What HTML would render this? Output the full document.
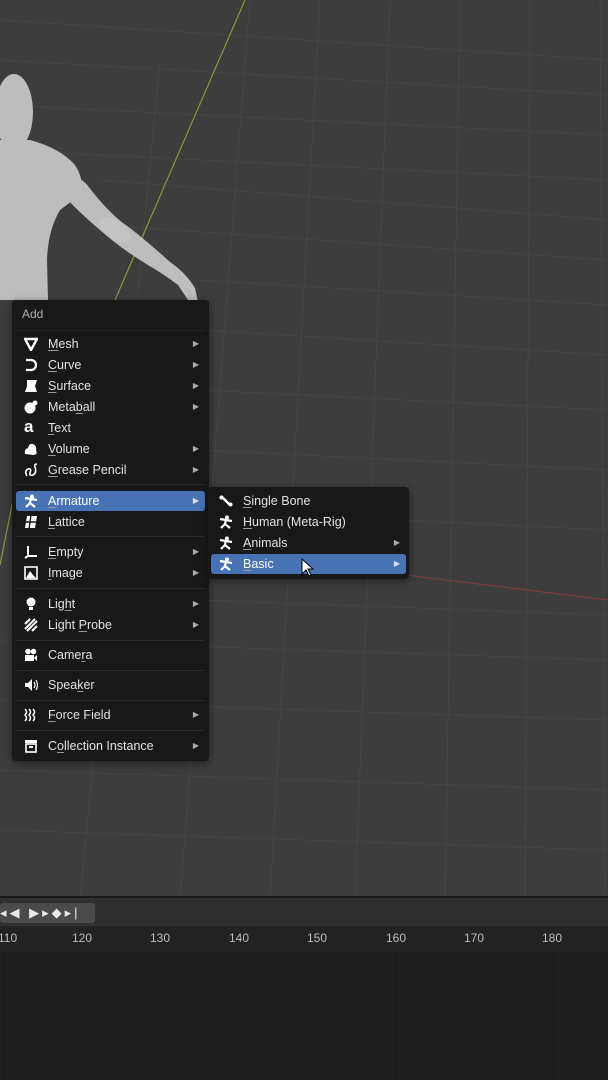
<!DOCTYPE html>
<html><head><meta charset="utf-8"><style>
*{margin:0;padding:0;box-sizing:border-box}
body{width:608px;height:1080px;overflow:hidden;background:#3d3d3d;font-family:"Liberation Sans",sans-serif;position:relative}
.menu{position:absolute;background:#181818;border-radius:4px;box-shadow:0 2px 8px rgba(0,0,0,.5)}
.it{position:absolute;left:4px;right:4px;height:20px;color:#e2e2e2;font-size:12.5px;line-height:20px;padding-left:32px}
.it.hl{background:#4772b3;border-radius:3px;color:#fff}
.it .ic{position:absolute;left:8px;top:3px;width:14px;height:14px}
.it .ar{position:absolute;right:6px;top:0;font-size:8px;color:#aaa}
.it.hl .ar{color:#dde}
.sep{position:absolute;left:4px;right:4px;height:1px;background:#2a2a2a}
.u{text-decoration:underline;text-decoration-color:#999;text-underline-offset:2px}
.num{position:absolute;top:931px;color:#bdbdbd;font-size:12px}
</style></head><body>
<svg width="608" height="900" style="position:absolute;left:0;top:0">
<g stroke="#454545" stroke-width="1" fill="none">
<path d="M0 20 L608 60"/><path d="M0 60 L608 95"/><path d="M0 105 L608 135"/><path d="M0 150 L608 180"/><path d="M100 180 L608 220"/><path d="M100 225 L608 260"/><path d="M200 280 L608 305"/><path d="M200 330 L608 355"/><path d="M200 390 L608 410"/><path d="M200 450 L608 470"/><path d="M400 520 L608 530"/><path d="M200 600 L608 615"/><path d="M0 640 L608 660"/><path d="M0 700 L608 720"/><path d="M0 770 L608 790"/><path d="M0 830 L608 850"/>
<path d="M320 0 L270 900"/><path d="M390 0 L355 900"/><path d="M460 0 L445 900"/><path d="M530 0 L525 900"/><path d="M600 0 L605 900"/><path d="M250 0 L180 900"/><path d="M160 60 L80 900"/>
</g>
<path d="M245 0 L115 300" stroke="#8a9a3a" stroke-width="1.2"/>
<path d="M0 565 L15 490" stroke="#8a9a3a" stroke-width="1.2"/>
<path d="M405 575 L608 600" stroke="#8a3a40" stroke-width="1"/>
<g fill="#bdbdbd">
<ellipse cx="14" cy="112" rx="19" ry="38"/>
<path d="M0 140 L30 140 Q60 148 75 165 Q85 180 80 195 L60 210 Q48 230 47 260 L48 300 L0 300 Z"/>
<path d="M68 180 Q80 175 88 186 Q110 215 130 228 Q155 248 170 262 Q185 272 195 288 L198 302 L188 300 L178 285 Q165 275 148 265 Q120 248 100 230 Q80 213 68 200 Z"/>
</g>
<ellipse cx="115" cy="230" rx="18" ry="9" fill="#c4c4c4" transform="rotate(35 115 230)"/>
</svg>

<div class="menu" style="left:12px;top:300px;width:197px;height:461px">
<div style="position:absolute;left:10px;top:7px;color:#b0b0b0;font-size:12px">Add</div>
<div class="sep" style="top:30px;background:#252525"></div>
<div class="it" style="top:34px"><svg class="ic" viewBox="0 0 14 14"><path d="M1 2H13L7 13Z" fill="none" stroke="#fff" stroke-width="2.4"/></svg><span class="u">M</span>esh<span class="ar">▶</span></div>
<div class="it" style="top:55px"><svg class="ic" viewBox="0 0 14 14"><path d="M2 2H7A5 5 0 0 1 7 12H2" fill="none" stroke="#fff" stroke-width="2.2"/></svg><span class="u">C</span>urve<span class="ar">▶</span></div>
<div class="it" style="top:76px"><svg class="ic" viewBox="0 0 14 14"><path d="M3 1H13L11 7L13 13H1L3 7Z" fill="#fff"/></svg><span class="u">S</span>urface<span class="ar">▶</span></div>
<div class="it" style="top:97px"><svg class="ic" viewBox="0 0 14 14"><circle cx="6" cy="8" r="5.5" fill="#fff"/><circle cx="11" cy="3" r="2.5" fill="#fff"/></svg>Meta<span class="u">b</span>all<span class="ar">▶</span></div>
<div class="it" style="top:118px"><span class="ic" style="color:#fff;font-size:17px;line-height:14px;top:2px;left:8px;font-weight:bold">a</span><span class="u">T</span>ext</div>
<div class="it" style="top:139px"><svg class="ic" viewBox="0 0 14 14"><path d="M1 12Q0 7 4 6Q5 1 9 2Q13 4 12 8Q14 12 10 13Z" fill="#fff"/></svg><span class="u">V</span>olume<span class="ar">▶</span></div>
<div class="it" style="top:160px"><svg class="ic" viewBox="0 0 14 14"><path d="M3 13Q0 8 4 6Q8 5 6 10Q5 13 9 12Q13 10 11 4Q10 1 13 1" fill="none" stroke="#fff" stroke-width="1.6"/></svg><span class="u">G</span>rease Pencil<span class="ar">▶</span></div>
<div class="sep" style="top:184px"></div>
<div class="it hl" style="top:191px"><svg class="ic" viewBox="0 0 14 14"><circle cx="8" cy="2.5" r="2" fill="#fff"/><path d="M1 4L13 6M7 4L6 9L2 13M6 9L11 13" stroke="#fff" stroke-width="2.2" fill="none"/></svg><span class="u">A</span>rmature<span class="ar">▶</span></div>
<div class="it" style="top:212px"><svg class="ic" viewBox="0 0 14 14"><path d="M3 1H13L11 13H1Z" fill="#fff"/><path d="M7 0L5 14M1 7H13" stroke="#181818" stroke-width="1.4"/></svg><span class="u">L</span>attice</div>
<div class="sep" style="top:236px"></div>
<div class="it" style="top:242px"><svg class="ic" viewBox="0 0 14 14"><path d="M4 1V11H13M4 11L1 13" stroke="#fff" stroke-width="2" fill="none"/></svg><span class="u">E</span>mpty<span class="ar">▶</span></div>
<div class="it" style="top:263px"><svg class="ic" viewBox="0 0 14 14"><rect x="1" y="1" width="12" height="12" fill="none" stroke="#fff" stroke-width="1.6"/><path d="M2 12L6 5L9 9L12 12Z" fill="#fff"/></svg><span class="u">I</span>mage<span class="ar">▶</span></div>
<div class="sep" style="top:288px"></div>
<div class="it" style="top:294px"><svg class="ic" viewBox="0 0 14 14"><circle cx="7" cy="5" r="4.5" fill="#fff"/><rect x="5" y="10" width="4" height="3" fill="#fff"/></svg>Lig<span class="u">h</span>t<span class="ar">▶</span></div>
<div class="it" style="top:315px"><svg class="ic" viewBox="0 0 14 14"><path d="M1 6L6 1M1 11L11 1M3 13L13 3M8 13L13 8" stroke="#fff" stroke-width="2" fill="none"/></svg>Light <span class="u">P</span>robe<span class="ar">▶</span></div>
<div class="sep" style="top:340px"></div>
<div class="it" style="top:345px"><svg class="ic" viewBox="0 0 14 14"><circle cx="4" cy="3.5" r="2.8" fill="#fff"/><circle cx="9.5" cy="3.5" r="2.8" fill="#fff"/><rect x="1" y="7" width="9" height="6" fill="#fff"/><path d="M10 10L13 7V13Z" fill="#fff"/></svg>Came<span class="u">r</span>a</div>
<div class="sep" style="top:370px"></div>
<div class="it" style="top:375px"><svg class="ic" viewBox="0 0 14 14"><path d="M1 5H4L8 1V13L4 9H1Z" fill="#fff"/><path d="M10 4Q12 7 10 10M12 2Q15 7 12 12" stroke="#fff" stroke-width="1.2" fill="none"/></svg>Spea<span class="u">k</span>er</div>
<div class="sep" style="top:400px"></div>
<div class="it" style="top:405px"><svg class="ic" viewBox="0 0 14 14"><path d="M1 1Q4 4 1 7Q4 10 1 13M5 1Q8 4 5 7Q8 10 5 13M9 1Q12 4 9 7Q12 10 9 13" stroke="#fff" stroke-width="1.5" fill="none"/></svg><span class="u">F</span>orce Field<span class="ar">▶</span></div>
<div class="sep" style="top:430px"></div>
<div class="it" style="top:436px"><svg class="ic" viewBox="0 0 14 14"><rect x="1" y="1" width="12" height="3" fill="#fff"/><rect x="2" y="5" width="10" height="8" fill="none" stroke="#fff" stroke-width="1.6"/><rect x="5" y="7" width="4" height="2" fill="#fff"/></svg>C<span class="u">o</span>llection Instance<span class="ar">▶</span></div>
</div>

<div class="menu" style="left:208px;top:487px;width:201px;height:92px">
<div class="it" style="top:4px;left:3px;right:3px"><svg class="ic" viewBox="0 0 14 14"><path d="M3 3L11 11" stroke="#fff" stroke-width="2.4"/><circle cx="2.5" cy="3.5" r="2" fill="#fff"/><circle cx="11.5" cy="10.5" r="2" fill="#fff"/></svg><span class="u">S</span>ingle Bone</div>
<div class="it" style="top:25px;left:3px;right:3px"><svg class="ic" viewBox="0 0 14 14"><circle cx="8" cy="2.5" r="2" fill="#fff"/><path d="M1 4L13 6M7 4L6 9L2 13M6 9L11 13" stroke="#fff" stroke-width="2.2" fill="none"/></svg><span class="u">H</span>uman (Meta-Rig)</div>
<div class="it" style="top:46px;left:3px;right:3px"><svg class="ic" viewBox="0 0 14 14"><circle cx="8" cy="2.5" r="2" fill="#fff"/><path d="M1 4L13 6M7 4L6 9L2 13M6 9L11 13" stroke="#fff" stroke-width="2.2" fill="none"/></svg><span class="u">A</span>nimals<span class="ar">▶</span></div>
<div class="it hl" style="top:67px;left:3px;right:3px"><svg class="ic" viewBox="0 0 14 14"><circle cx="8" cy="2.5" r="2" fill="#fff"/><path d="M1 4L13 6M7 4L6 9L2 13M6 9L11 13" stroke="#fff" stroke-width="2.2" fill="none"/></svg><span class="u">B</span>asic<span class="ar">▶</span></div>
</div>
<svg width="14" height="20" style="position:absolute;left:301px;top:558px"><path d="M1 1V16L5 12L8 18L10 17L7 11H12Z" fill="#fff" stroke="#000" stroke-width="1"/></svg>

<div style="position:absolute;left:0;top:896px;width:608px;height:2px;background:#1a1a1a"></div>
<div style="position:absolute;left:0;top:898px;width:608px;height:28px;background:#303030"></div>
<div style="position:absolute;left:0;top:903px;width:95px;height:20px;background:#4a4a4a;border-radius:3px"></div>
<div style="position:absolute;left:0;top:903px;color:#e8e8e8;font-size:13px;line-height:20px;letter-spacing:3px">◂◀ ▶▸◆▸|</div>
<div style="position:absolute;left:0;top:926px;width:608px;height:26px;background:#222"></div>
<div style="position:absolute;left:0;top:952px;width:608px;height:128px;background:#1f1f1f"></div>
<div class="num" style="left:-2px">110</div><div class="num" style="left:72px">120</div><div class="num" style="left:150px">130</div><div class="num" style="left:229px">140</div><div class="num" style="left:307px">150</div><div class="num" style="left:386px">160</div><div class="num" style="left:464px">170</div><div class="num" style="left:542px">180</div>
<svg width="608" height="128" style="position:absolute;left:0;top:952px"><g stroke="#1b1b1b" stroke-width="1"><path d="M4 0V128M83 0V128M162 0V128M240 0V128M318 0V128M396 0V128M474 0V128M553 0V128"/></g></svg>
</body></html>
